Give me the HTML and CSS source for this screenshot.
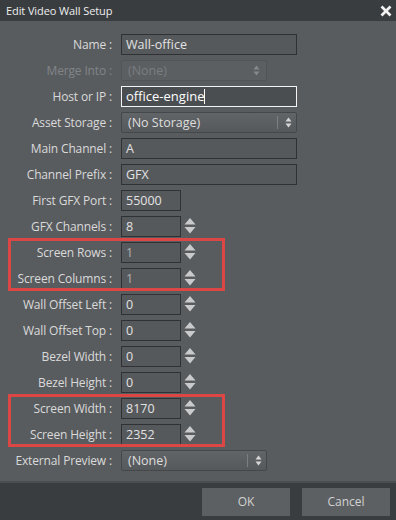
FILE: index.html
```html
<!DOCTYPE html>
<html>
<head>
  <meta charset="UTF-8">
  <title>Edit Video Wall Setup</title>
  <link rel="stylesheet" href="styles.css">
</head>
<body>
  <div class="dialog">
    <div class="titlebar">
      <span class="title">Edit Video Wall Setup</span>
      <svg class="close" width="12" height="12" viewBox="0 0 12 12">
        <line x1="1.5" y1="1.5" x2="10.5" y2="10.5" stroke="#f2f2f2" stroke-width="2.6"/>
        <line x1="10.5" y1="1.5" x2="1.5" y2="10.5" stroke="#f2f2f2" stroke-width="2.6"/>
      </svg>
    </div>

    <div class="form">
      <div class="row">
        <label>Name :</label>
        <div class="field wide">Wall-office</div>
      </div>
      <div class="row disabled">
        <label>Merge Into :</label>
        <div class="select mid">
          <span>(None)</span>
          <span class="sel-arrows"></span>
        </div>
      </div>
      <div class="row">
        <label>Host or IP :</label>
        <div class="field wide focus">office-engine<span class="caret"></span></div>
      </div>
      <div class="row">
        <label>Asset Storage :</label>
        <div class="select wide">
          <span>(No Storage)</span>
          <span class="sel-arrows sep"></span>
        </div>
      </div>
      <div class="row">
        <label>Main Channel :</label>
        <div class="field wide">A</div>
      </div>
      <div class="row">
        <label>Channel Prefix :</label>
        <div class="field wide">GFX</div>
      </div>
      <div class="row">
        <label>First GFX Port :</label>
        <div class="field short">55000</div>
      </div>
      <div class="row">
        <label>GFX Channels :</label>
        <div class="field short">8</div>
        <span class="spin"></span>
      </div>

      <div class="highlight">
        <div class="row">
          <label>Screen Rows :</label>
          <div class="field short dim">1</div>
          <span class="spin"></span>
        </div>
        <div class="row">
          <label>Screen Columns :</label>
          <div class="field short dim">1</div>
          <span class="spin"></span>
        </div>
      </div>

      <div class="row">
        <label>Wall Offset Left :</label>
        <div class="field short">0</div>
        <span class="spin"></span>
      </div>
      <div class="row">
        <label>Wall Offset Top :</label>
        <div class="field short">0</div>
        <span class="spin"></span>
      </div>
      <div class="row">
        <label>Bezel Width :</label>
        <div class="field short">0</div>
        <span class="spin"></span>
      </div>
      <div class="row">
        <label>Bezel Height :</label>
        <div class="field short">0</div>
        <span class="spin"></span>
      </div>

      <div class="highlight">
        <div class="row">
          <label>Screen Width :</label>
          <div class="field short">8170</div>
          <span class="spin"></span>
        </div>
        <div class="row">
          <label>Screen Height :</label>
          <div class="field short">2352</div>
          <span class="spin"></span>
        </div>
      </div>

      <div class="row">
        <label>External Preview :</label>
        <div class="select mid">
          <span>(None)</span>
          <span class="sel-arrows sep"></span>
        </div>
      </div>
    </div>

    <div class="footer">
      <button class="btn">OK</button>
      <button class="btn">Cancel</button>
    </div>
  </div>
</body>
</html>
```

FILE: styles.css
```css
* {
  margin: 0;
  padding: 0;
  box-sizing: border-box;
}

body {
  width: 396px;
  height: 520px;
  overflow: hidden;
  font-family: "Open Sans", "Noto Sans", sans-serif;
  font-size: 12px;
  color: #dcdcdc;
  background: #595c5f;
}

.dialog {
  height: 520px;
  display: flex;
  flex-direction: column;
}

.titlebar {
  height: 21px;
  background: #3a3d40;
  display: flex;
  align-items: center;
  justify-content: space-between;
  padding: 0 4px 0 6px;
}

.title {
  font-size: 11px;
  color: #eeeeee;
  letter-spacing: -0.1px;
}

.close {
  display: block;
}

.form {
  flex: 1;
  padding-top: 13px;
  display: flex;
  flex-direction: column;
  gap: 6px;
}

.row {
  height: 20px;
  display: flex;
  align-items: center;
  gap: 9px;
}

.row label {
  width: 112px;
  text-align: right;
  color: #dadada;
  white-space: nowrap;
  letter-spacing: -0.15px;
}

.row.disabled label {
  color: #818487;
}

.field {
  height: 21px;
  line-height: 19px;
  padding: 0 4px;
  border: 1px solid #2f3134;
  background: #56595c;
  color: #e2e2e2;
  font-size: 12.5px;
  white-space: nowrap;
}

.field.wide {
  width: 176px;
}

.field.short {
  width: 60px;
}

.field.dim {
  color: #b0b0b0;
}

.field.focus {
  border: 1px solid #f4f4f4;
  background: #4b4e51;
  color: #ffffff;
  font-size: 13px;
}

.caret {
  display: inline-block;
  width: 1px;
  height: 15px;
  background: #ffffff;
  vertical-align: -3px;
}

.select {
  height: 21px;
  display: flex;
  align-items: center;
  justify-content: space-between;
  padding-left: 6px;
  border: 1px solid #45484b;
  border-radius: 2px;
  background: linear-gradient(#626568, #56595c);
  color: #dedede;
  font-size: 12.5px;
}

.select.wide {
  width: 176px;
}

.select.mid {
  width: 146px;
}

.disabled .select {
  background: #5c5f62;
  border-color: #525558;
  color: #7a7d80;
}

.sel-arrows {
  width: 19px;
  height: 13px;
  background-image: url("data:image/svg+xml,%3Csvg xmlns='http://www.w3.org/2000/svg' width='19' height='13' viewBox='0 0 19 13'%3E%3Cpath d='M6.5 5.5 L9.5 1.5 L12.5 5.5 Z M6.5 7.5 L12.5 7.5 L9.5 11.5 Z' fill='%23d6d6d6'/%3E%3C/svg%3E");
}

.disabled .sel-arrows {
  opacity: 0.35;
}

.sel-arrows.sep {
  border-left: 1px solid #7c7f82;
  background-position: 1px 0;
}

.spin {
  width: 14px;
  height: 18px;
  margin-left: -7px;
  background-image: url("data:image/svg+xml,%3Csvg xmlns='http://www.w3.org/2000/svg' width='14' height='18' viewBox='0 0 14 18'%3E%3Cpath d='M1.5 7.5 L7 1 L12.5 7.5 Z M1.5 10 L12.5 10 L7 16.5 Z' fill='%23c9cacb'/%3E%3C/svg%3E");
}

.highlight {
  position: relative;
  display: flex;
  flex-direction: column;
  gap: 6px;
}

.highlight::after {
  content: '';
  position: absolute;
  left: 8px;
  width: 211px;
  top: -4px;
  bottom: -3px;
  border: 3px solid #dc4745;
  pointer-events: none;
}

.footer {
  height: 39px;
  background: #3a3d40;
  border-top: 2px solid #4b4e51;
  display: flex;
  justify-content: flex-end;
  align-items: center;
  gap: 12px;
  padding: 0 6px 0 0;
}

.btn {
  width: 88px;
  height: 28px;
  border: none;
  background: #5d6063;
  color: #d2d2d2;
  font-family: "Open Sans", "Noto Sans", sans-serif;
  font-size: 12px;
}
```
